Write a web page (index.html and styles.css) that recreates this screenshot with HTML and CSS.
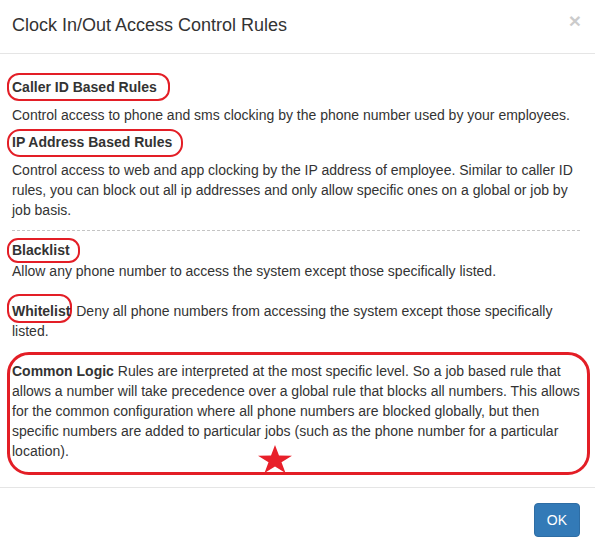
FILE: index.html
```html
<!DOCTYPE html>
<html>
<head>
<meta charset="utf-8">
<link rel="stylesheet" href="styles.css">
</head>
<body>
<div class="modal">
  <div class="modal-header">
    <button class="close" type="button">×</button>
    <h4 class="modal-title">Clock In/Out Access Control Rules</h4>
  </div>
  <div class="modal-body">
    <div class="rule-title t-caller"><span class="mark m-caller">Caller ID Based Rules</span></div>
    <p class="desc d-caller">Control access to phone and sms clocking by the phone number used by your employees.</p>
    <div class="rule-title t-ip"><span class="mark m-ip">IP Address Based Rules</span></div>
    <p class="desc d-ip">Control access to web and app clocking by the IP address of employee. Similar to caller ID rules, you can block out all ip addresses and only allow specific ones on a global or job by job basis.</p>
    <hr class="divider">
    <div class="rule-title t-black"><span class="mark m-black">Blacklist</span></div>
    <p class="desc d-black">Allow any phone number to access the system except those specifically listed.</p>
    <p class="desc d-white"><span class="mark m-white">Whitelist</span> Deny all phone numbers from accessing the system except those specifically listed.</p>
    <div class="logic">
      <p class="desc"><b>Common Logic</b> Rules are interpreted at the most specific level. So a job based rule that allows a number will take precedence over a global rule that blocks all numbers. This allows for the common configuration where all phone numbers are blocked globally, but then specific numbers are added to particular jobs (such as the phone number for a particular location).</p>
      <svg class="star" viewBox="0 0 34 28" preserveAspectRatio="none" aria-hidden="true">
        <polygon points="17,0 21,10.5 34,10.7 23.5,17.3 27.5,28 17,21.5 6.5,28 10.5,17.3 0,10.7 13,10.5" fill="#e8202a"/>
      </svg>
    </div>
  </div>
  <div class="modal-footer">
    <button class="btn" type="button">OK</button>
  </div>
</div>
</body>
</html>
```
FILE: styles.css
```css
html, body {
  margin: 0;
  padding: 0;
  background: #fff;
}
body {
  font-family: "Liberation Sans", Arial, Helvetica, sans-serif;
  font-size: 14px;
  line-height: 20px;
  color: #333;
}
.modal {
  width: 595px;
  height: 548px;
  overflow: hidden;
  background: #fff;
}
.modal-header {
  padding: 12px 14px 15px 12px;
  border-bottom: 1px solid #e5e5e5;
}
.modal-title {
  margin: 0;
  font-size: 18px;
  line-height: 26px;
  font-weight: normal;
  color: #333;
}
.close {
  float: right;
  margin-top: -2px;
  padding: 0;
  border: 0;
  background: transparent;
  font-family: "Liberation Sans", Arial, sans-serif;
  font-size: 21px;
  font-weight: bold;
  line-height: 1;
  color: #000;
  opacity: 0.2;
}
.modal-body {
  padding: 15px 12px 12px 12px;
  width: 568px;
}
.desc {
  margin: 0;
}
.rule-title {
  font-weight: bold;
}
.mark {
  border: 2px solid #e31e26;
  border-radius: 12px;
  margin-left: -5px;
  padding-left: 3px;
}
.m-caller { padding: 4px 11px 4px 3px; }
.m-ip { padding: 3px 9px 5px 3px; border-radius: 13px; }
.m-black { padding: 2px 8px 3px 3px; border-radius: 11px; }
.m-white {
  font-weight: bold;
  padding: 7px 0 2px 3px;
  border-radius: 12px;
}
.t-caller { margin-top: 8px; }
.d-caller { margin-top: 8px; }
.t-ip { margin-top: 7px; }
.d-ip { margin-top: 8px; }
.divider {
  margin: 10px 0 0 0;
  height: 0;
  border: 0;
  border-top: 1px dashed #c4c4c4;
}
.t-black { margin-top: 9px; }
.d-black { margin-top: 1px; }
.d-white { margin-top: 20px; }
.logic {
  position: relative;
  margin: 11px -10px 0 -5px;
  padding: 6px 7px 11px 2px;
  border: 3px solid #e31e26;
  border-radius: 22px;
}
.star {
  position: absolute;
  left: 248px;
  top: 90px;
  width: 34px;
  height: 28px;
}
.modal-footer {
  border-top: 1px solid #e5e5e5;
  padding: 15px;
  text-align: right;
}
.btn {
  font-family: "Liberation Sans", Arial, sans-serif;
  font-size: 14px;
  line-height: 20px;
  padding: 6px 12px;
  color: #fff;
  background: #337ab7;
  border: 1px solid #2e6da4;
  border-radius: 4px;
}
```
